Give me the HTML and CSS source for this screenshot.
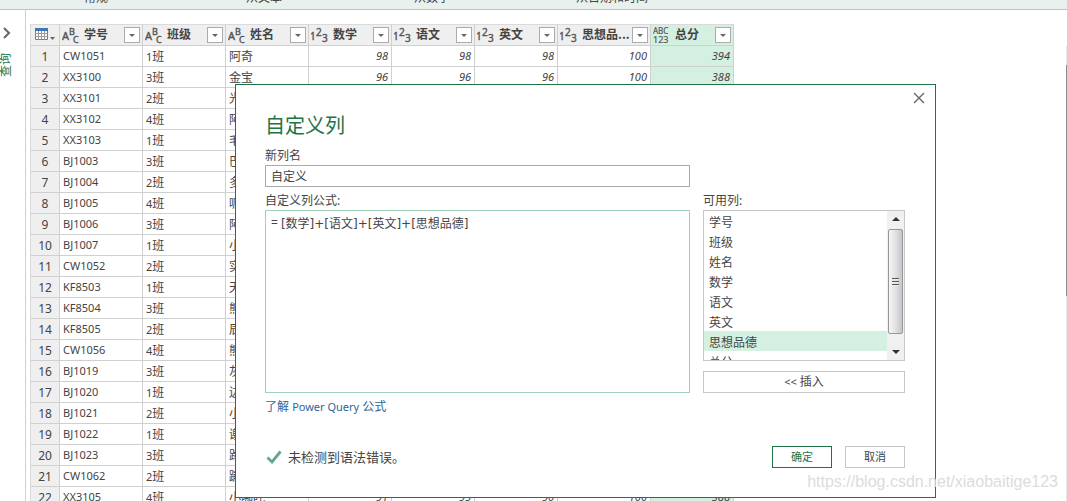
FILE: index.html
```
<!DOCTYPE html>
<html lang="zh-CN">
<head>
<meta charset="utf-8">
<title>自定义列</title>
<link rel="stylesheet" href="styles.css">
</head>
<body>
<svg class="defs" aria-hidden="true">
  <symbol id="abc" viewBox="0 0 17 18"><g class="glyph"><text class="lead" x="0" y="14">A</text><text x="7" y="9">B</text><text x="11" y="17">C</text></g></symbol>
  <symbol id="num" viewBox="0 0 17 18"><g class="glyph digits"><text x="-1" y="14">1</text><text x="5" y="10">2</text><text x="11" y="16">3</text></g></symbol>
  <symbol id="any" viewBox="0 0 17 18"><g class="glyph-small"><text x="0" y="8">ABC</text><text class="digits" x="0" y="17">123</text></g></symbol>
</svg>
<header class="ribbon">
  <span>常规</span><span>从文本</span><span>从数字</span><span>从日期和时间</span>
</header>
<main class="workspace">
  <aside class="queries">
    <button class="expand" aria-label="展开"><svg width="10" height="12" viewBox="0 0 10 12"><path d="M2 1l5 5-5 5" fill="none" stroke="#666" stroke-width="2"/></svg></button>
    <span class="queries-title">查询</span>
  </aside>
  <section class="grid-area">
    <table class="data">
      <colgroup><col class="c-index"><col><col><col><col><col><col><col class="c-wide"><col></colgroup>
      <thead>
        <tr>
          <th><button class="table-menu" aria-label="表"><svg width="20" height="14" viewBox="0 0 20 14"><path d="M.5 .5h12v11H.5z" fill="#fff" stroke="#777"/><path d="M0 0h13v3H0z" fill="#3f76b5"/><path d="M3.500 3v9M6.500 3v9M9.500 3v9M0 5.500h13M0 8.500h13" stroke="#999"/><path d="M15 9h5l-2.500 3z" fill="#666"/></svg></button></th>
          <th><div class="head"><svg class="type"><use href="#abc"/></svg><span>学号</span><button class="filter" aria-label="筛选"></button></div></th>
          <th><div class="head"><svg class="type"><use href="#abc"/></svg><span>班级</span><button class="filter" aria-label="筛选"></button></div></th>
          <th><div class="head"><svg class="type"><use href="#abc"/></svg><span>姓名</span><button class="filter" aria-label="筛选"></button></div></th>
          <th><div class="head"><svg class="type"><use href="#num"/></svg><span>数学</span><button class="filter" aria-label="筛选"></button></div></th>
          <th><div class="head"><svg class="type"><use href="#num"/></svg><span>语文</span><button class="filter" aria-label="筛选"></button></div></th>
          <th><div class="head"><svg class="type"><use href="#num"/></svg><span>英文</span><button class="filter" aria-label="筛选"></button></div></th>
          <th><div class="head"><svg class="type"><use href="#num"/></svg><span>思想品...</span><button class="filter" aria-label="筛选"></button></div></th>
          <th><div class="head"><svg class="type"><use href="#any"/></svg><span>总分</span><button class="filter" aria-label="筛选"></button></div></th>
        </tr>
      </thead>
      <tbody>
        <tr><th>1</th><td>CW1051</td><td>1<b>班</b></td><td><b>阿奇</b></td><td>98</td><td>98</td><td>98</td><td>100</td><td>394</td></tr>
        <tr><th>2</th><td>XX3100</td><td>3<b>班</b></td><td><b>金宝</b></td><td>96</td><td>96</td><td>96</td><td>100</td><td>388</td></tr>
        <tr><th>3</th><td>XX3101</td><td>2<b>班</b></td><td><b>光</b></td><td></td><td></td><td></td><td></td><td></td></tr>
        <tr><th>4</th><td>XX3102</td><td>4<b>班</b></td><td><b>阿</b></td><td></td><td></td><td></td><td></td><td></td></tr>
        <tr><th>5</th><td>XX3103</td><td>1<b>班</b></td><td><b>毛</b></td><td></td><td></td><td></td><td></td><td></td></tr>
        <tr><th>6</th><td>BJ1003</td><td>3<b>班</b></td><td><b>巴</b></td><td></td><td></td><td></td><td></td><td></td></tr>
        <tr><th>7</th><td>BJ1004</td><td>2<b>班</b></td><td><b>多</b></td><td></td><td></td><td></td><td></td><td></td></tr>
        <tr><th>8</th><td>BJ1005</td><td>4<b>班</b></td><td><b>呱</b></td><td></td><td></td><td></td><td></td><td></td></tr>
        <tr><th>9</th><td>BJ1006</td><td>3<b>班</b></td><td><b>阿</b></td><td></td><td></td><td></td><td></td><td></td></tr>
        <tr><th>10</th><td>BJ1007</td><td>1<b>班</b></td><td><b>小</b></td><td></td><td></td><td></td><td></td><td></td></tr>
        <tr><th>11</th><td>CW1052</td><td>2<b>班</b></td><td><b>实</b></td><td></td><td></td><td></td><td></td><td></td></tr>
        <tr><th>12</th><td>KF8503</td><td>1<b>班</b></td><td><b>天</b></td><td></td><td></td><td></td><td></td><td></td></tr>
        <tr><th>13</th><td>KF8504</td><td>3<b>班</b></td><td><b>熊</b></td><td></td><td></td><td></td><td></td><td></td></tr>
        <tr><th>14</th><td>KF8505</td><td>2<b>班</b></td><td><b>辰</b></td><td></td><td></td><td></td><td></td><td></td></tr>
        <tr><th>15</th><td>CW1056</td><td>4<b>班</b></td><td><b>熊</b></td><td></td><td></td><td></td><td></td><td></td></tr>
        <tr><th>16</th><td>BJ1019</td><td>3<b>班</b></td><td><b>灰</b></td><td></td><td></td><td></td><td></td><td></td></tr>
        <tr><th>17</th><td>BJ1020</td><td>1<b>班</b></td><td><b>边</b></td><td></td><td></td><td></td><td></td><td></td></tr>
        <tr><th>18</th><td>BJ1021</td><td>2<b>班</b></td><td><b>小</b></td><td></td><td></td><td></td><td></td><td></td></tr>
        <tr><th>19</th><td>BJ1022</td><td>1<b>班</b></td><td><b>谢</b></td><td></td><td></td><td></td><td></td><td></td></tr>
        <tr><th>20</th><td>BJ1023</td><td>3<b>班</b></td><td><b>路</b></td><td></td><td></td><td></td><td></td><td></td></tr>
        <tr><th>21</th><td>CW1062</td><td>2<b>班</b></td><td><b>蹦</b></td><td></td><td></td><td></td><td></td><td></td></tr>
        <tr><th>22</th><td>XX3105</td><td>4<b>班</b></td><td><b>小哪吒</b></td><td>91</td><td>95</td><td>90</td><td>100</td><td>388</td></tr>
      </tbody>
    </table>
  </section>
  <div class="page-scroll"><div class="page-thumb"></div></div>
</main>

<div class="dialog" role="dialog" aria-labelledby="dlg-title">
  <button class="close" aria-label="关闭"><svg width="12" height="12" viewBox="0 0 12 12"><path d="M1 1l10 10M11 1L1 11" stroke="#666" stroke-width="1.400"/></svg></button>
  <h1 id="dlg-title">自定义列</h1>
  <div class="form">
    <div class="field">
      <label for="name">新列名</label>
      <input id="name" type="text" value="自定义">
    </div>
    <div class="field formula-field">
      <label for="formula">自定义列公式:</label>
      <div class="formula"><span>=</span><textarea id="formula" spellcheck="false">[数学]+[语文]+[英文]+[思想品德]</textarea></div>
    </div>
    <div class="field columns-field">
      <label for="columns">可用列:</label>
      <div class="list">
        <select id="columns" size="8">
          <option>学号</option><option>班级</option><option>姓名</option><option>数学</option><option>语文</option><option>英文</option><option selected>思想品德</option><option>总分</option>
        </select>
        <div class="scroll">
          <svg width="16" height="17" viewBox="0 0 16 17"><path d="M8 6l4 4H4z" fill="#333"/></svg>
          <div class="thumb"><i></i><i></i><i></i></div>
          <svg width="16" height="17" viewBox="0 0 16 17"><path d="M4 7h8l-4 4z" fill="#333"/></svg>
        </div>
      </div>
      <button class="insert"><span class="latin">&lt;&lt;</span> 插入</button>
    </div>
  </div>
  <a class="learn" href="#">了解 <span class="latin">Power Query</span> 公式</a>
  <footer class="actions">
    <svg width="16" height="14" viewBox="0 0 16 14"><path d="M1.500 7.500l4.500 4.500L14.500 1.500" fill="none" stroke="#64a58d" stroke-width="2.800"/></svg>
    <span class="status">未检测到语法错误。</span>
    <button class="ok">确定</button>
    <button class="cancel">取消</button>
  </footer>
</div>
<div class="watermark">https://blog.csdn.net/xiaobaitige123</div>
</body>
</html>
```
FILE: styles.css
```
* { box-sizing: border-box; }

body {
  margin: 0;
  height: 100vh;
  overflow: hidden;
  position: relative;
  display: flex;
  flex-direction: column;
  background: #fff;
  color: #444;
  font: 12px/16px "Noto Sans", "Noto Sans CJK SC", sans-serif;
}

button, input, textarea, select { font: inherit; color: inherit; margin: 0; }
button { padding: 0; border: 0; background: none; }
.defs { position: absolute; width: 0; height: 0; }
.latin { font-size: 11px; }

/* Ribbon, scrolled so only its bottom edge shows */
.ribbon {
  flex: none;
  height: 10px;
  overflow: hidden;
  display: flex;
  align-items: flex-end;
  padding: 0 0 3px 30px;
  background: #e8f1ee;
  border-bottom: 1px solid #a9cfc2;
}
.ribbon span { text-align: center; }
.ribbon span:first-child { width: 132px; }
.ribbon span:nth-child(2) { width: 204px; }
.ribbon span:nth-child(3) { width: 132px; }
.ribbon span:last-child { width: 228px; }

.workspace { flex: 1; min-height: 0; display: flex; overflow: hidden; }

.queries {
  flex: none;
  width: 26px;
  border-right: 1px solid #d0d0d0;
  padding-top: 16px;
  display: flex;
  flex-direction: column;
  align-items: flex-start;
  gap: 14px;
}
.expand { height: 13px; line-height: 0; padding-left: 2px; }
.queries-title {
  writing-mode: vertical-rl;
  text-orientation: sideways;
  transform: rotate(180deg);
  line-height: 12px;
  color: #217346;
}

.grid-area { flex: 1; padding: 14px 0 0 4px; overflow: hidden; }

.data { border-collapse: separate; border-spacing: 0; table-layout: fixed; width: 704px; }
.data col { width: 83px; }
.data .c-index { width: 30px; }
.data .c-wide { width: 93px; }
.data th, .data td {
  height: 21px;
  padding: 0 3px;
  overflow: hidden;
  white-space: nowrap;
  border-right: 1px solid #d0d0d0;
  border-bottom: 1px solid #d0d0d0;
  font-size: 11px;
  line-height: 18px;
  text-align: left;
}
.data b { font: 12px/18px "Noto Sans CJK SC", sans-serif; }
.data td:nth-child(n+5) { text-align: right; font-style: italic; }
.data td:last-child { background: #d3f0e0; }
.data tbody th {
  background: #efefef;
  text-align: center;
  font-size: 12px;
  font-weight: 400;
  padding: 2px 0 0;
}
.data thead th {
  height: 22px;
  padding: 0 2px;
  background: #efefef;
  border-top: 1px solid #dadada;
}
.data thead th:first-child { border-left: 1px solid #dadada; padding-left: 4px; }
.data tbody th { border-left: 1px solid #dadada; }
.data thead th:last-child { background: #d3f0e0; }
.head { display: flex; align-items: center; height: 20px; font: bold 12px/18px "Noto Sans CJK SC", sans-serif; }
.head span { flex: 1; padding: 0 0 2px 5px; }
.type { flex: none; width: 17px; height: 18px; }
.glyph { font: 400 9px "Noto Sans", sans-serif; fill: #555; stroke: #555; stroke-width: .4px; }
.glyph .lead { font-size: 11px; }
.glyph.digits { font-size: 10px; }
.glyph-small { font: 400 8px "Noto Sans", sans-serif; fill: #555; stroke: #555; stroke-width: .2px; }
.glyph-small .digits { font-size: 9px; }
.filter {
  flex: none;
  width: 16px;
  height: 16px;
  display: grid;
  place-items: center;
  border: 1px solid #ababab;
  background: #fff;
}
.filter::before { content: ""; border: 3px solid transparent; border-top-color: #666; border-bottom: 0; }
.table-menu { display: block; line-height: 0; }

.page-scroll { flex: none; width: 1px; margin-top: 36px; padding-top: 19px; background: #e6e6e6; }
.page-thumb { height: 231px; background: #8c8c8c; }

/* Custom column dialog */
.dialog {
  position: absolute;
  top: 84px;
  left: 235px;
  right: 131px;
  padding: 28px 30px 29px 29px;
  background: #fff;
  border: 1px solid #217346;
}
.close { position: absolute; top: 7px; right: 10px; line-height: 0; }
.dialog h1 { margin: 0 0 8px; font-size: 20px; line-height: 26px; font-weight: 400; color: #217346; }
.form {
  display: grid;
  grid-template-columns: 425fr 202fr;
  grid-template-rows: auto auto;
  column-gap: 13px;
  row-gap: 5px;
}
.field { display: flex; flex-direction: column; }
.field label { line-height: 18px; }
.field input { height: 22px; padding: 0 5px; border: 1px solid #ababab; outline: 0; }
.formula-field { grid-row: 2; }
.columns-field { grid-row: 2; grid-column: 2; }
.formula { height: 183px; display: flex; gap: 3px; padding: 4px 5px; border: 1px solid #9fd2b8; }
.formula textarea {
  flex: 1;
  padding: 0;
  border: 0;
  outline: 0;
  resize: none;
  font: 12px/18px "DejaVu Sans", "Noto Sans CJK SC", sans-serif;
}
.list { height: 151px; display: flex; border: 1px solid #c6c6c6; }
.list select {
  flex: 1;
  min-width: 0;
  height: 149px;
  padding: 0;
  border: 0;
  outline: 0;
  overflow: hidden;
  scrollbar-width: none;
}
.list option { height: 20px; min-height: 20px; padding: 2px 5px; line-height: 16px; color: #444; }
.list option:checked { background: #d3f0e0 linear-gradient(#d3f0e0, #d3f0e0); }
.scroll { width: 17px; display: flex; flex-direction: column; align-items: center; background: #f0f0f0; }
.thumb {
  flex: 1;
  width: 15px;
  margin: 1px 0 9px;
  display: flex;
  flex-direction: column;
  justify-content: center;
  align-items: center;
  gap: 1px;
  border: 1px solid #979797;
  border-radius: 2px;
  background: linear-gradient(90deg, #f5f5f5, #e4e4e6 45%, #c4c5ca);
}
.thumb i { width: 7px; height: 2px; background: #555; border-bottom: 1px solid #eee; }
.insert { height: 22px; margin-top: 10px; border: 1px solid #c6c6c6; }
.learn { display: block; margin-top: 6px; color: #2f6399; text-decoration: none; }
.actions { display: flex; align-items: center; margin-top: 31px; padding-left: 1px; }
.status { flex: 1; padding-left: 6px; font-size: 13px; }
.ok, .cancel { width: 60px; height: 22px; border: 1px solid #c6c6c6; font-size: 11px; }
.ok { margin-right: 13px; border-color: #217346; color: #217346; }

.watermark {
  position: absolute;
  right: 9px;
  bottom: 9px;
  font: 16px/20px "Liberation Sans", Arial, sans-serif;
  color: #dcdcdc;
}
```
